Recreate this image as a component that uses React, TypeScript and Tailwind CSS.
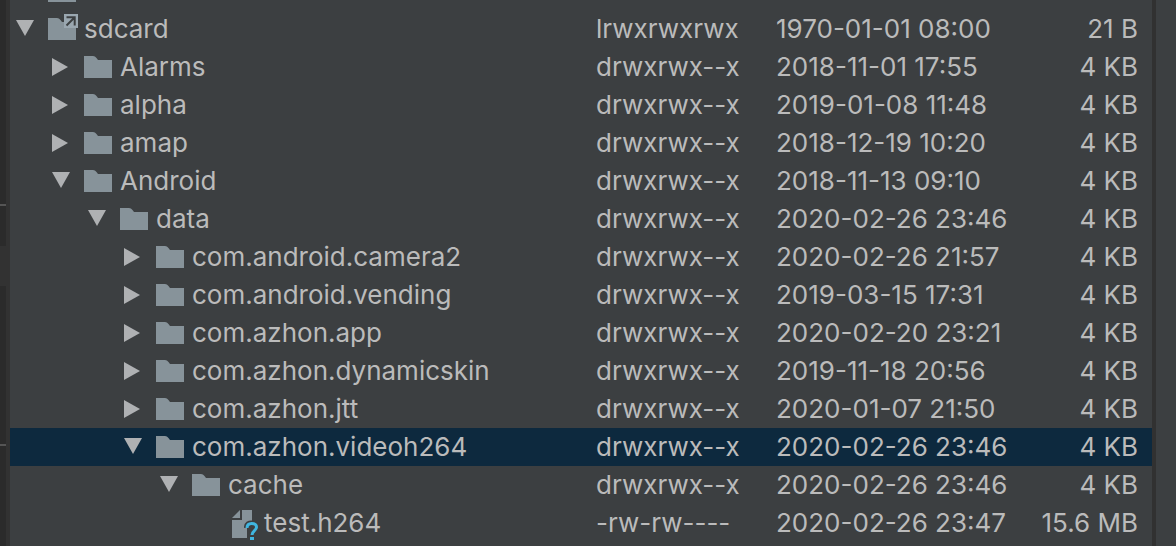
type Kind = "folder" | "link" | "file";
type Entry = {
  name: string;
  depth: number;
  kind?: Kind;
  open?: boolean;
  perm: string;
  date: string;
  size: string;
  selected?: boolean;
};

const entries: Entry[] = [
  { name: "sbin", depth: 0, perm: "drwxr-x---", date: "1970-01-01 08:00", size: "60 B" },
  { name: "sdcard", depth: 0, kind: "link", open: true, perm: "lrwxrwxrwx", date: "1970-01-01 08:00", size: "21 B" },
  { name: "Alarms", depth: 1, perm: "drwxrwx--x", date: "2018-11-01 17:55", size: "4 KB" },
  { name: "alpha", depth: 1, perm: "drwxrwx--x", date: "2019-01-08 11:48", size: "4 KB" },
  { name: "amap", depth: 1, perm: "drwxrwx--x", date: "2018-12-19 10:20", size: "4 KB" },
  { name: "Android", depth: 1, open: true, perm: "drwxrwx--x", date: "2018-11-13 09:10", size: "4 KB" },
  { name: "data", depth: 2, open: true, perm: "drwxrwx--x", date: "2020-02-26 23:46", size: "4 KB" },
  { name: "com.android.camera2", depth: 3, perm: "drwxrwx--x", date: "2020-02-26 21:57", size: "4 KB" },
  { name: "com.android.vending", depth: 3, perm: "drwxrwx--x", date: "2019-03-15 17:31", size: "4 KB" },
  { name: "com.azhon.app", depth: 3, perm: "drwxrwx--x", date: "2020-02-20 23:21", size: "4 KB" },
  { name: "com.azhon.dynamicskin", depth: 3, perm: "drwxrwx--x", date: "2019-11-18 20:56", size: "4 KB" },
  { name: "com.azhon.jtt", depth: 3, perm: "drwxrwx--x", date: "2020-01-07 21:50", size: "4 KB" },
  { name: "com.azhon.videoh264", depth: 3, open: true, perm: "drwxrwx--x", date: "2020-02-26 23:46", size: "4 KB", selected: true },
  { name: "cache", depth: 4, open: true, perm: "drwxrwx--x", date: "2020-02-26 23:46", size: "4 KB" },
  { name: "test.h264", depth: 5, kind: "file", perm: "-rw-rw----", date: "2020-02-26 23:47", size: "15.6 MB" },
];

const indents = ["pl-1", "pl-10", "pl-[76px]", "pl-28", "pl-[148px]", "pl-[184px]"];

function Arrow({ open }: { open?: boolean }) {
  return (
    <svg viewBox="0 0 22 22" className="size-[22px]" fill="#afb1b3" aria-hidden="true">
      {open ? <path d="M2 2H20L11 18Z" /> : <path d="M2 2V20L18 11Z" />}
    </svg>
  );
}

function EntryIcon({ kind = "folder" }: { kind?: Kind }) {
  if (kind === "file") {
    return (
      <svg viewBox="-2 -1 32 32" className="size-8 overflow-visible" fill="none" aria-hidden="true">
        <path d="M4 10L12 2V10Z" fill="#87939a" />
        <path d="M14 2H24V13C20 13 17 16 16 20H19V30H4V12H14Z" fill="#87939a" />
        <path d="M19 19C19 16.500 21 15.500 23.500 15.500C26.500 15.500 28.500 17 28.500 19.300C28.500 22.500 24 22.500 24 27" stroke="#3c3f41" strokeWidth="6" />
        <path d="M19 20C19 17 20.800 15.500 23.700 15.500C26.700 15.500 28.500 17 28.500 19.300C28.500 22.500 24 22.800 24 27" stroke="#40b6e0" strokeWidth="3" />
        <path d="M22 29H26V32H22Z" fill="#40b6e0" />
      </svg>
    );
  }
  return (
    <svg viewBox="0 1 32 32" className="size-8" aria-hidden="true">
      <path d="M2 6H11Q13 6 14.500 8L16 10H30V28H2Z" fill="#87939a" />
      {kind === "link" && (
        <>
          <path d="M18 2H32V16H18Z" fill="#9aa7b0" />
          <path d="M20.500 5.300H28.700V13.500M28.500 5.500L20.500 13.500" fill="none" stroke="#3c3f41" strokeWidth="2" />
        </>
      )}
    </svg>
  );
}

function Row({ entry }: { entry: Entry }) {
  return (
    <tr className={entry.selected ? "h-[38px] bg-[#0d293e]" : "h-[38px]"} aria-selected={entry.selected}>
      <td className="p-0">
        <div className={`flex items-center ${indents[entry.depth]}`}>
          {entry.kind === "file" ? (
            <span className="w-8" />
          ) : (
            <button type="button" className="mr-2.5 flex" aria-label={`Toggle ${entry.name}`} aria-expanded={!!entry.open}>
              <Arrow open={entry.open} />
            </button>
          )}
          <EntryIcon kind={entry.kind} />
          <span className="pl-1.5">{entry.name}</span>
        </div>
      </td>
      <td className="p-0">{entry.perm}</td>
      <td className="p-0">{entry.date}</td>
      <td className="p-0 pr-3.5 text-right">{entry.size}</td>
    </tr>
  );
}

export default function App() {
  return (
    <div className="flex h-screen overflow-hidden bg-[#3c3f41] font-['Inter',sans-serif] text-[26px] leading-[38px] text-[#bbbbbb]">
      <div className="flex w-2.5 shrink-0 flex-col border-r-4 border-[#323232] bg-[#2b2b2b]">
        <div className="h-[206px] shrink-0 border-b-2 border-[#555555]" />
        <div className="h-10 shrink-0" />
        <div className="h-10 shrink-0 bg-[#323232]" />
        <div className="h-40 shrink-0 border-b-2 border-[#555555]" />
      </div>
      <main className="flex min-w-0 grow flex-col justify-end pb-1">
        <table className="w-full shrink-0 table-fixed border-collapse whitespace-nowrap">
          <colgroup>
            <col />
            <col className="w-[180px]" />
            <col className="w-[236px]" />
            <col className="w-[140px]" />
          </colgroup>
          <tbody>
            {entries.map((entry) => (
              <Row key={entry.name} entry={entry} />
            ))}
          </tbody>
        </table>
      </main>
      <div className="w-6 shrink-0 border-l-4 border-[#313131]" />
    </div>
  );
}
